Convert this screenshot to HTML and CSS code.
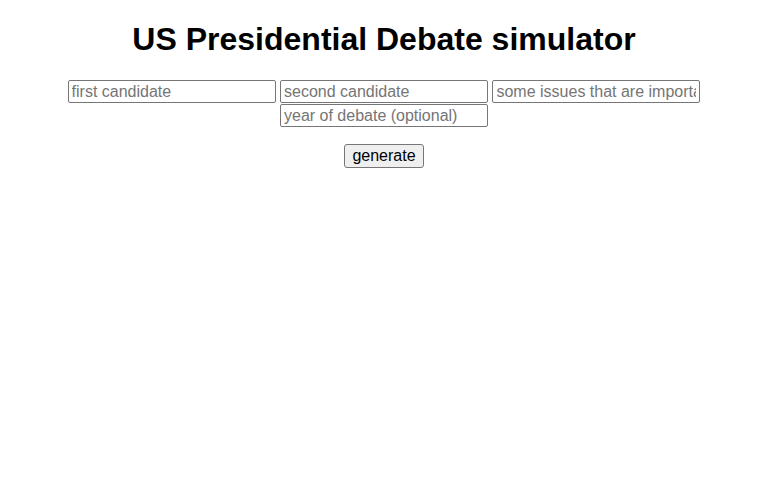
FILE: index.html
```html
<!DOCTYPE html>
<html lang="en">
<head>
    <meta charset="UTF-8">
    <meta name="viewport" content="width=device-width, initial-scale=1.0">
    <title>US Presidential Debate simulator</title>
    <link rel="stylesheet" href="styles.css">
</head>
<body>
    <h1>US Presidential Debate simulator</h1>

    <div class="fields">
        <input class="field" type="text" placeholder="first candidate">
        <input class="field" type="text" placeholder="second candidate">
        <input class="field" type="text" placeholder="some issues that are important to you">
        <input class="field" type="text" placeholder="year of debate (optional)">
    </div>

    <p class="actions">
        <button class="button" id="generateButton">generate</button>
    </p>
</body>
</html>
```

FILE: styles.css
```css
body {
    font-family: 'Liberation Sans', Arial, sans-serif;
    margin: 0 8px;
    background-color: #fff;
    color: #000;
    text-align: center;
}
h1 {
    font-size: 32px;
    font-weight: bold;
    margin: 21px 0 22px;
    line-height: 37px;
    padding-top: 0;
}
.fields {
    line-height: 24px;
    font-size: 16px;
}
.field {
    box-sizing: border-box;
    width: 208px;
    height: 23px;
    padding: 1px 3px;
    border: 1px solid #767676;
    border-radius: 2px;
    font-family: 'Liberation Sans', Arial, sans-serif;
    font-size: 16px;
    color: #000;
    background-color: #fff;
    vertical-align: top;
    margin: 0;
}
.field::placeholder {
    color: #757575;
}
.actions {
    margin: 16px 0;
}
.button {
    box-sizing: border-box;
    height: 24px;
    padding: 1px 7px;
    border: 1px solid #767676;
    border-radius: 3px;
    background-color: #efefef;
    font-family: 'Liberation Sans', Arial, sans-serif;
    font-size: 16px;
    color: #000;
    cursor: pointer;
}
```
